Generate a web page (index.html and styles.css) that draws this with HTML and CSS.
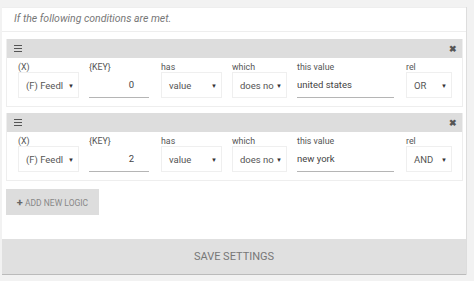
FILE: index.html
```html
<!DOCTYPE html>
<html lang="en">
<head>
    <meta charset="UTF-8">
    <meta name="viewport" content="width=device-width, initial-scale=1.0">
    <title>logic settings</title>
    <link rel="stylesheet" href="styles.css">
</head>
<body>
    <div class="panel">
        <p class="intro">If the following conditions are met.</p>
        <div class="rules">
            <div class="rule">
                <div class="rule-head">
                    <span class="burger"><i></i><i></i><i></i></span>
                    <span class="close">&#10006;</span>
                </div>
                <div class="rule-body">
                    <div class="field">
                        <label>(X)</label>
                        <div class="select"><span class="val">(F) Feedl</span><span class="arrow">&#9660;</span></div>
                    </div>
                    <div class="field">
                        <label>{KEY}</label>
                        <div class="input num">0</div>
                    </div>
                    <div class="field">
                        <label>has</label>
                        <div class="select"><span class="val">value</span><span class="arrow">&#9660;</span></div>
                    </div>
                    <div class="field">
                        <label>which</label>
                        <div class="select"><span class="val">does no</span><span class="arrow">&#9660;</span></div>
                    </div>
                    <div class="field">
                        <label>this value</label>
                        <div class="input">united states</div>
                    </div>
                    <div class="field">
                        <label>rel</label>
                        <div class="select"><span class="val">OR</span><span class="arrow">&#9660;</span></div>
                    </div>
                </div>
            </div>
            <div class="rule">
                <div class="rule-head">
                    <span class="burger"><i></i><i></i><i></i></span>
                    <span class="close">&#10006;</span>
                </div>
                <div class="rule-body">
                    <div class="field">
                        <label>(X)</label>
                        <div class="select"><span class="val">(F) Feedl</span><span class="arrow">&#9660;</span></div>
                    </div>
                    <div class="field">
                        <label>{KEY}</label>
                        <div class="input num">2</div>
                    </div>
                    <div class="field">
                        <label>has</label>
                        <div class="select"><span class="val">value</span><span class="arrow">&#9660;</span></div>
                    </div>
                    <div class="field">
                        <label>which</label>
                        <div class="select"><span class="val">does no</span><span class="arrow">&#9660;</span></div>
                    </div>
                    <div class="field">
                        <label>this value</label>
                        <div class="input">new york</div>
                    </div>
                    <div class="field">
                        <label>rel</label>
                        <div class="select"><span class="val">AND</span><span class="arrow">&#9660;</span></div>
                    </div>
                </div>
            </div>
            <button class="add-btn"><b>+</b> ADD NEW LOGIC</button>
        </div>
        <button class="save-btn">SAVE SETTINGS</button>
    </div>
</body>
</html>
```
FILE: styles.css
```css
* {box-sizing:border-box;}
body {
    margin:0;
    background:#f2f2f2;
    font-family:Roboto, "Liberation Sans", sans-serif;
    color:#555;
}
.panel {
    width:465px; margin-left:2px;
    background:#fff;
    border-right:1px solid #ddd;
}
.intro {
    margin:7px 0 0; height:25px;
    padding-left:12px;
    border-top:1px solid #eee; border-bottom:1px solid #eee;
    font-size:10.5px; font-style:italic; color:#777;
    line-height:22px;
}
.rules {
    padding:7px 3px 0 4px;
}
.rule {
    margin-bottom:6px;
    border:1px solid #eee; border-top:0;
}
.rule-head {
    height:19px; background:#ddd;
    display:flex; align-items:center; justify-content:space-between;
    padding:0 5px 0 7px;
}
.burger {display:flex; flex-direction:column; gap:2px;}
.burger i {display:block; width:8px; height:1px; background:#555;}
.close {font-size:9px; color:#555; font-weight:bold;}
.rule-body {
    display:grid;
    grid-template-columns:71px 72px 71px 65px 109px 46px;
    padding:4px 0 8px 11px;
}
.field label {
    display:block; height:10px;
    font-size:8.8px; line-height:10px; color:#555;
}
.select {
    height:26px; margin-right:10px;
    border:1px solid #efefef;
    display:flex; align-items:center; justify-content:space-between;
    padding:0 4px 0 7px;
    font-size:9.5px; color:#555;
}
.field:last-child .select {margin-right:0;}
.select .val {white-space:nowrap;}
.arrow {font-size:6px; color:#333;}
.input {
    height:26px; margin-right:12px;
    border-bottom:1px solid #b5b5b5;
    font-size:9.5px; color:#444;
    line-height:26px;
}
.input.num {text-align:right; padding-right:15px;}
.add-btn {
    margin-top:2px;
    width:93px; height:26px;
    border:0; background:#ddd;
    font-family:Roboto, "Liberation Sans", sans-serif;
    font-size:8.5px; color:#888;
    padding:0;
}
.add-btn b {font-size:11px; color:#666;}
.save-btn {
    display:block; width:100%;
    margin-top:24px; height:36px;
    border:0; border-bottom:1px solid #bbb;
    background:#e0e0e0;
    font-family:Roboto, "Liberation Sans", sans-serif;
    font-size:11px; color:#777;
}
```
